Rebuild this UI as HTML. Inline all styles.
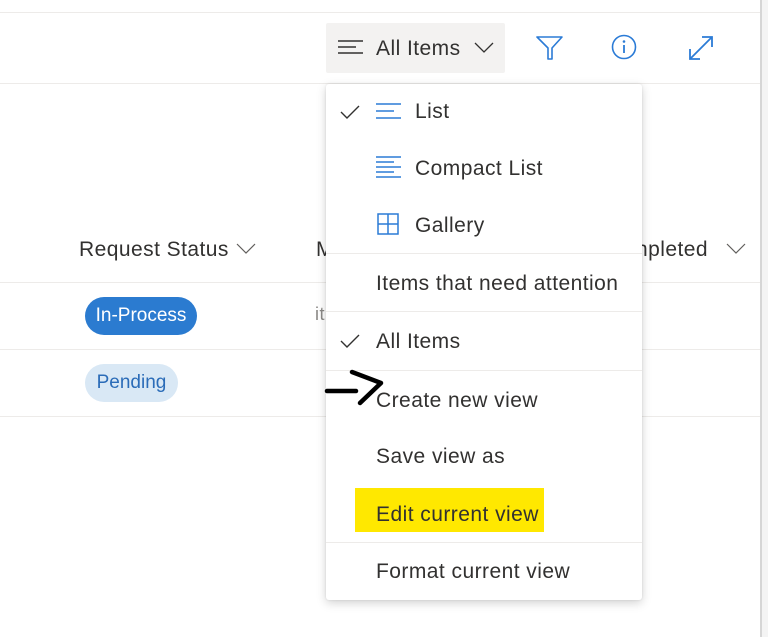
<!DOCTYPE html>
<html><head><meta charset="utf-8"><style>
body{margin:0;width:768px;height:637px;background:#fff;position:relative;overflow:hidden;font-family:"Liberation Sans",sans-serif;color:#323130}
.a{position:absolute;white-space:nowrap}
.t{position:absolute;font-size:21px;letter-spacing:0.45px;line-height:24px;white-space:nowrap;color:#323130}
</style></head><body>
<div class="a" style="left:0;top:12px;width:760px;height:1px;background:#edebe9"></div>
<div class="a" style="left:760px;top:0;width:2px;height:637px;background:#d6d6d6"></div>
<div class="a" style="left:762px;top:0;width:6px;height:637px;background:#f4f4f4"></div>
<div class="a" style="left:0;top:83px;width:760px;height:1px;background:#edebe9"></div>
<!-- toolbar -->
<div class="a" style="left:326px;top:23px;width:179px;height:50px;background:#f3f2f1;border-radius:2px"></div>
<svg class="a" style="left:338px;top:38px" width="26" height="20"><g stroke="#323130" stroke-width="1.5"><line x1="0" y1="3" x2="25" y2="3"/><line x1="0" y1="9" x2="18" y2="9"/><line x1="0" y1="15" x2="25" y2="15"/></g></svg>
<div class="t" style="left:376px;top:37px">All Items</div>
<svg class="a" style="left:474px;top:42px" width="20" height="12"><path d="M1 1 L10 10 L19 1" fill="none" stroke="#323130" stroke-width="1.3"/></svg>
<svg class="a" style="left:536px;top:35px" width="28" height="26"><path d="M1 2 H26 L16 13 V24 H12 V13 Z" fill="none" stroke="#2b7bd6" stroke-width="1.6" stroke-linejoin="round"/></svg>
<svg class="a" style="left:611px;top:34px" width="26" height="26"><circle cx="13" cy="13" r="11.5" fill="none" stroke="#2b7bd6" stroke-width="1.6"/><line x1="13" y1="11" x2="13" y2="19" stroke="#2b7bd6" stroke-width="1.8"/><circle cx="13" cy="7.5" r="1.3" fill="#2b7bd6"/></svg>
<svg class="a" style="left:688px;top:35px" width="26" height="26"><g fill="none" stroke="#2b7bd6" stroke-width="1.8"><line x1="2" y1="24" x2="24" y2="2"/><path d="M14 2 H24 V12"/><path d="M2 14 V24 H12"/></g></svg>
<!-- table -->
<div class="t" style="left:79px;top:238px;color:#323130">Request Status</div>
<svg class="a" style="left:236px;top:243px" width="20" height="12"><path d="M1 1 L10 10 L19 1" fill="none" stroke="#605e5c" stroke-width="1.2"/></svg>
<div class="t" style="left:316px;top:238px">M</div>
<div class="t" style="left:636px;top:238px">npleted</div>
<svg class="a" style="left:726px;top:243px" width="20" height="12"><path d="M1 1 L10 10 L19 1" fill="none" stroke="#605e5c" stroke-width="1.2"/></svg>
<div class="a" style="left:0;top:282px;width:760px;height:1px;background:#edebe9"></div>
<div class="a" style="left:0;top:349px;width:760px;height:1px;background:#edebe9"></div>
<div class="a" style="left:0;top:416px;width:760px;height:1px;background:#edebe9"></div>
<div class="a" style="left:85px;top:297px;width:112px;height:38px;border-radius:19px;background:#2b7bd0;color:#fff;font-size:19px;line-height:38px;text-align:center">In-Process</div>
<div class="a" style="left:85px;top:364px;width:93px;height:38px;border-radius:19px;background:#d9e8f5;color:#2b6cb8;font-size:19px;line-height:38px;text-align:center">Pending</div>
<div class="t" style="left:315px;top:302px;color:#8a8886;font-size:18px">it</div>
<!-- menu -->
<div class="a" style="left:326px;top:84px;width:316px;height:516px;background:#fff;border-radius:3px;box-shadow:0 3px 10px rgba(0,0,0,.18),0 0 2px rgba(0,0,0,.1)"></div>
<div class="a" style="left:326px;top:253px;width:316px;height:1px;background:#edebe9"></div>
<div class="a" style="left:326px;top:311px;width:316px;height:1px;background:#edebe9"></div>
<div class="a" style="left:326px;top:370px;width:316px;height:1px;background:#edebe9"></div>
<div class="a" style="left:326px;top:542px;width:316px;height:1px;background:#edebe9"></div>
<svg class="a" style="left:340px;top:104px" width="20" height="16"><path d="M1 8 L7 14 L19 2" fill="none" stroke="#323130" stroke-width="1.4"/></svg>
<svg class="a" style="left:376px;top:102px" width="26" height="18"><g stroke="#2b7bd6" stroke-width="1.5"><line x1="0" y1="2" x2="25" y2="2"/><line x1="0" y1="9" x2="18" y2="9"/><line x1="0" y1="16" x2="25" y2="16"/></g></svg>
<div class="t" style="left:415px;top:100px">List</div>
<svg class="a" style="left:376px;top:156px" width="26" height="24"><g stroke="#2b7bd6" stroke-width="1.4"><line x1="0" y1="1" x2="25" y2="1"/><line x1="0" y1="6" x2="18" y2="6"/><line x1="0" y1="11" x2="25" y2="11"/><line x1="0" y1="16" x2="18" y2="16"/><line x1="0" y1="21" x2="25" y2="21"/></g></svg>
<div class="t" style="left:415px;top:157px">Compact List</div>
<svg class="a" style="left:377px;top:213px" width="22" height="22"><g fill="none" stroke="#2b7bd6" stroke-width="1.5"><rect x="1" y="1" width="20" height="20"/><line x1="11" y1="1" x2="11" y2="21"/><line x1="1" y1="11" x2="21" y2="11"/></g></svg>
<div class="t" style="left:415px;top:214px">Gallery</div>
<div class="t" style="left:376px;top:272px">Items that need attention</div>
<svg class="a" style="left:340px;top:333px" width="20" height="16"><path d="M1 8 L7 14 L19 2" fill="none" stroke="#323130" stroke-width="1.4"/></svg>
<div class="t" style="left:376px;top:330px">All Items</div>
<div class="t" style="left:376px;top:389px">Create new view</div>
<div class="t" style="left:376px;top:445px">Save view as</div>
<div class="a" style="left:355px;top:488px;width:189px;height:44px;background:#ffe800"></div>
<div class="t" style="left:376px;top:503px">Edit current view</div>
<div class="t" style="left:376px;top:560px">Format current view</div>
<svg class="a" style="left:320px;top:360px" width="70" height="50"><g fill="none" stroke="#000" stroke-width="4.5" stroke-linecap="round" stroke-linejoin="round"><line x1="7" y1="31" x2="36" y2="31"/><path d="M32 12 L61 23 L40 43"/></g></svg>
</body></html>
